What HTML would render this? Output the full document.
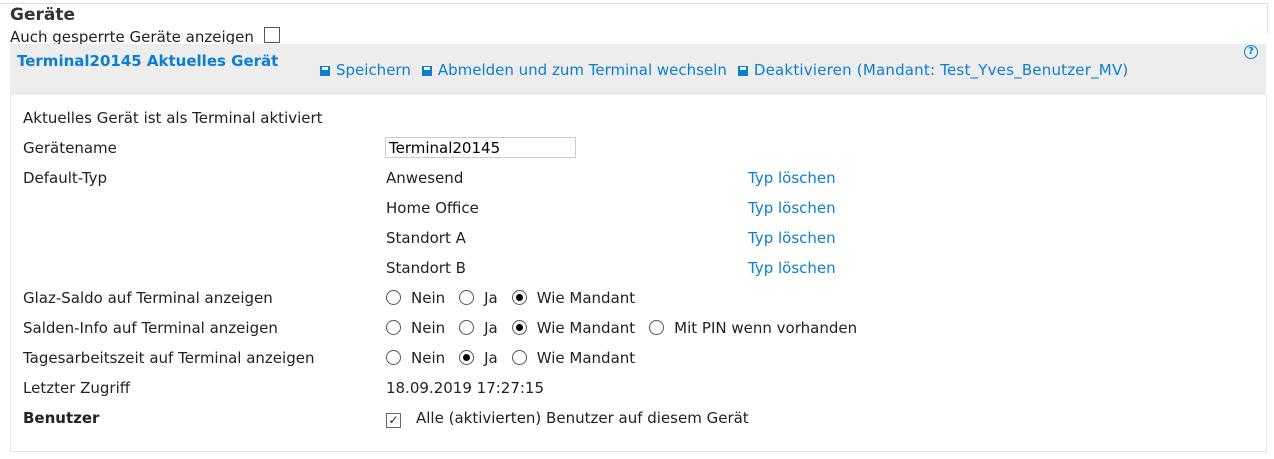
<!DOCTYPE html>
<html><head><meta charset="utf-8"><style>
body{margin:0;width:1274px;height:459px;background:#fff;font-family:"DejaVu Sans","Liberation Sans",sans-serif;font-size:15px;color:#222;position:relative;overflow:hidden}
.a{position:absolute;white-space:nowrap}
.l{color:#0a7fd0}
.r{display:inline-block;width:15px;height:15px;border:1px solid #555;border-radius:50%;vertical-align:-2px;margin-right:10px;box-sizing:border-box;position:relative}
.r.on::after{content:"";position:absolute;left:3px;top:3px;width:7px;height:7px;border-radius:50%;background:#000}
.s{display:inline-block;width:10px;height:10px;background:#0a7fd0;position:relative;vertical-align:-1px;margin-right:6px;margin-left:11px}
.s:first-child{margin-left:0}
.s::after{content:"";position:absolute;left:2px;top:1px;width:6px;height:3px;background:#fff}
.g{margin-right:14px}
</style></head><body>
<div class="a" style="left:0;top:3px;width:1268px;height:1px;background:#ddd"></div>
<div class="a" style="left:1267px;top:3px;width:1px;height:30px;background:#ddd"></div>
<div class="a" style="left:10px;top:5px;font-size:17px;font-weight:bold;color:#333">Geräte</div>
<div class="a" style="left:10px;top:27px">Auch gesperrte Geräte anzeigen <span style="display:inline-block;width:14px;height:14px;border:1px solid #555;vertical-align:-1px;margin-left:5px"></span></div>
<div class="a" style="left:10px;top:44px;width:1256px;height:51px;background:#ededed"></div>
<div class="a" style="left:10px;top:95px;width:1255px;height:356px;border:1px solid #e4e4e4;border-top:none"></div>
<div class="a l" style="left:17px;top:52px;font-weight:bold">Terminal20145 Aktuelles Gerät</div>
<div class="a l" style="left:320px;top:61px"><span class="s"></span>Speichern<span class="s"></span>Abmelden und zum Terminal wechseln<span class="s"></span><span style="letter-spacing:0.2px">Deaktivieren (Mandant: Test_Yves_Benutzer_MV)</span></div>
<div class="a" style="left:1244px;top:45px;width:12px;height:12px;border:1.5px solid #0a7fd0;border-radius:50%;color:#0a7fd0;font-size:10px;font-weight:bold;text-align:center;line-height:12px">?</div>
<div class="a" style="left:23px;top:109px">Aktuelles Gerät ist als Terminal aktiviert</div>
<div class="a" style="left:23px;top:139px">Gerätename</div>
<div class="a" style="left:385px;top:137px;width:191px;height:21px;border:1px solid #ccc;line-height:20px;padding-left:3px;box-sizing:border-box;color:#000">Terminal20145</div>
<div class="a" style="left:23px;top:169px">Default-Typ</div>
<div class="a" style="left:386px;top:169px">Anwesend</div><div class="a l" style="left:748px;top:169px">Typ löschen</div>
<div class="a" style="left:386px;top:199px">Home Office</div><div class="a l" style="left:748px;top:199px">Typ löschen</div>
<div class="a" style="left:386px;top:229px">Standort A</div><div class="a l" style="left:748px;top:229px">Typ löschen</div>
<div class="a" style="left:386px;top:259px">Standort B</div><div class="a l" style="left:748px;top:259px">Typ löschen</div>
<div class="a" style="left:23px;top:289px">Glaz-Saldo auf Terminal anzeigen</div>
<div class="a" style="left:386px;top:289px"><span class="r"></span><span class="g">Nein</span><span class="r"></span><span class="g">Ja</span><span class="r on"></span>Wie Mandant</div>
<div class="a" style="left:23px;top:319px">Salden-Info auf Terminal anzeigen</div>
<div class="a" style="left:386px;top:319px"><span class="r"></span><span class="g">Nein</span><span class="r"></span><span class="g">Ja</span><span class="r on"></span><span class="g">Wie Mandant</span><span class="r"></span>Mit PIN wenn vorhanden</div>
<div class="a" style="left:23px;top:349px">Tagesarbeitszeit auf Terminal anzeigen</div>
<div class="a" style="left:386px;top:349px"><span class="r"></span><span class="g">Nein</span><span class="r on"></span><span class="g">Ja</span><span class="r"></span>Wie Mandant</div>
<div class="a" style="left:23px;top:379px">Letzter Zugriff</div>
<div class="a" style="left:386px;top:379px">18.09.2019 17:27:15</div>
<div class="a" style="left:23px;top:409px;font-weight:bold">Benutzer</div>
<div class="a" style="left:386px;top:409px"><span style="display:inline-block;width:15px;height:15px;border:1px solid #666;box-sizing:border-box;vertical-align:-1px;margin-right:15px;font-size:12px;line-height:13px;text-align:center">✓</span>Alle (aktivierten) Benutzer auf diesem Gerät</div>
</body></html>
